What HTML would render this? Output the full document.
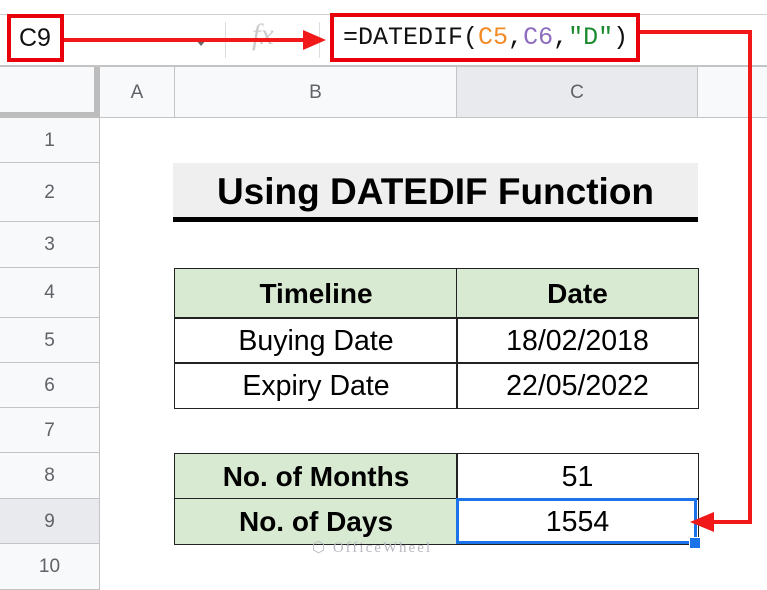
<!DOCTYPE html>
<html><head><style>
*{margin:0;padding:0;box-sizing:border-box}
body{width:767px;height:590px;position:relative;overflow:hidden;background:#fff;font-family:"Liberation Sans",Arial,sans-serif}
.a{position:absolute}
.rh{position:absolute;left:0;width:100px;background:#f8f9fa;border-bottom:1px solid #c4c4c4;border-right:1px solid #c4c4c4;color:#5f6368;font-size:19px;text-align:center}
.ch{position:absolute;top:67px;height:51px;background:#f8f9fa;border-right:1px solid #c4c4c4;border-bottom:1px solid #c4c4c4;color:#5f6368;font-size:19px;text-align:center;line-height:51px}
.c{position:absolute;border:1.5px solid #222;font-size:28.5px;text-align:center;color:#000}
.g{background:#d9ead3;font-weight:bold;font-size:28px}
</style></head><body>
<div class="a" style="left:0;top:14px;width:767px;height:1px;background:#d0d0d0"></div>
<div class="a" style="left:0;top:65px;width:767px;height:2px;background:#c4c4c4"></div>
<div class="a" style="left:225px;top:22px;width:1px;height:36px;background:#ddd"></div>
<div class="a" style="left:319px;top:22px;width:1px;height:36px;background:#ddd"></div>
<div class="a" style="left:196px;top:40px;width:0;height:0;border-left:5px solid transparent;border-right:5px solid transparent;border-top:6px solid #666"></div>
<div class="a" style="left:252px;top:18px;font-family:'Liberation Serif',serif;font-style:italic;font-size:30px;color:#ccc">fx</div>
<div class="a" style="left:7px;top:14px;width:57px;height:48px;border:4px solid #e8000b;font-size:25px;line-height:40px;padding-left:8px;color:#111">C9</div>
<div class="a" style="left:330px;top:13px;width:310px;height:49px;border:4px solid #e8000b;font-family:'Liberation Mono',monospace;font-size:25px;line-height:41px;padding-left:9px;color:#111">=DATEDIF(<span style="color:#f28b26">C5</span>,<span style="color:#8e6cbf">C6</span>,<span style="color:#1a8a2e">"D"</span>)</div>
<div class="a" style="left:0;top:67px;width:100px;height:51px;background:#f8f9fa;border-right:6px solid #bdbdbd;border-bottom:6px solid #bdbdbd"></div>
<div class="ch" style="left:100px;width:75px">A</div>
<div class="ch" style="left:175px;width:282px">B</div>
<div class="ch" style="left:457px;width:241px;background:#e8eaed">C</div>
<div class="ch" style="left:698px;width:69px;border-right:none"></div>
<div class="rh" style="top:118px;height:45px;line-height:45px">1</div>
<div class="rh" style="top:163px;height:59px;line-height:59px">2</div>
<div class="rh" style="top:222px;height:46px;line-height:46px">3</div>
<div class="rh" style="top:268px;height:50px;line-height:50px">4</div>
<div class="rh" style="top:318px;height:45px;line-height:45px">5</div>
<div class="rh" style="top:363px;height:45px;line-height:45px">6</div>
<div class="rh" style="top:408px;height:45px;line-height:45px">7</div>
<div class="rh" style="top:453px;height:46px;line-height:46px">8</div>
<div class="rh" style="top:499px;height:45px;line-height:45px;background:#e8eaed">9</div>
<div class="rh" style="top:544px;height:46px;line-height:46px">10</div>
<div class="a" style="left:173px;top:163px;width:525px;height:59px;background:#efefef;border-bottom:5px solid #000;font-size:37px;font-weight:bold;text-align:center;line-height:58px">Using DATEDIF Function</div>
<div class="c g" style="left:174px;top:268px;width:284px;height:51px;line-height:50px">Timeline</div>
<div class="c g" style="left:456px;top:268px;width:243px;height:51px;line-height:50px">Date</div>
<div class="c" style="left:174px;top:317px;width:284px;height:47px;line-height:46px">Buying Date</div>
<div class="c" style="left:456px;top:317px;width:243px;height:47px;line-height:46px">18/02/2018</div>
<div class="c" style="left:174px;top:362px;width:284px;height:47px;line-height:46px">Expiry Date</div>
<div class="c" style="left:456px;top:362px;width:243px;height:47px;line-height:46px">22/05/2022</div>
<div class="c g" style="left:174px;top:453px;width:284px;height:47px;line-height:46px">No. of Months</div>
<div class="c" style="left:456px;top:453px;width:243px;height:47px;line-height:46px">51</div>
<div class="c g" style="left:174px;top:498px;width:284px;height:47px;line-height:46px">No. of Days</div>
<div class="c" style="left:456px;top:498px;width:243px;height:47px;line-height:46px">1554</div>
<div class="a" style="left:456px;top:498px;width:241px;height:46px;border:3px solid #1a73e8"></div>
<div class="a" style="left:689px;top:537px;width:12px;height:12px;background:#1a73e8;border:1px solid #fff"></div>
<div class="a" style="left:312px;top:538px;font-family:'Liberation Serif',serif;font-size:15px;letter-spacing:2px;color:#b8b8c0">⬡ OfficeWheel</div>
<svg class="a" style="left:0;top:0" width="767" height="590">
<g fill="none" stroke="#f01818" stroke-width="4">
<line x1="64" y1="40" x2="305" y2="40"/>
<polyline points="640,32 750,32 750,522 712,522"/>
</g>
<polygon points="303,30 326,40 303,50" fill="#f01818"/>
<polygon points="714,512 690,522 714,532" fill="#f01818"/>
</svg>
</body></html>
